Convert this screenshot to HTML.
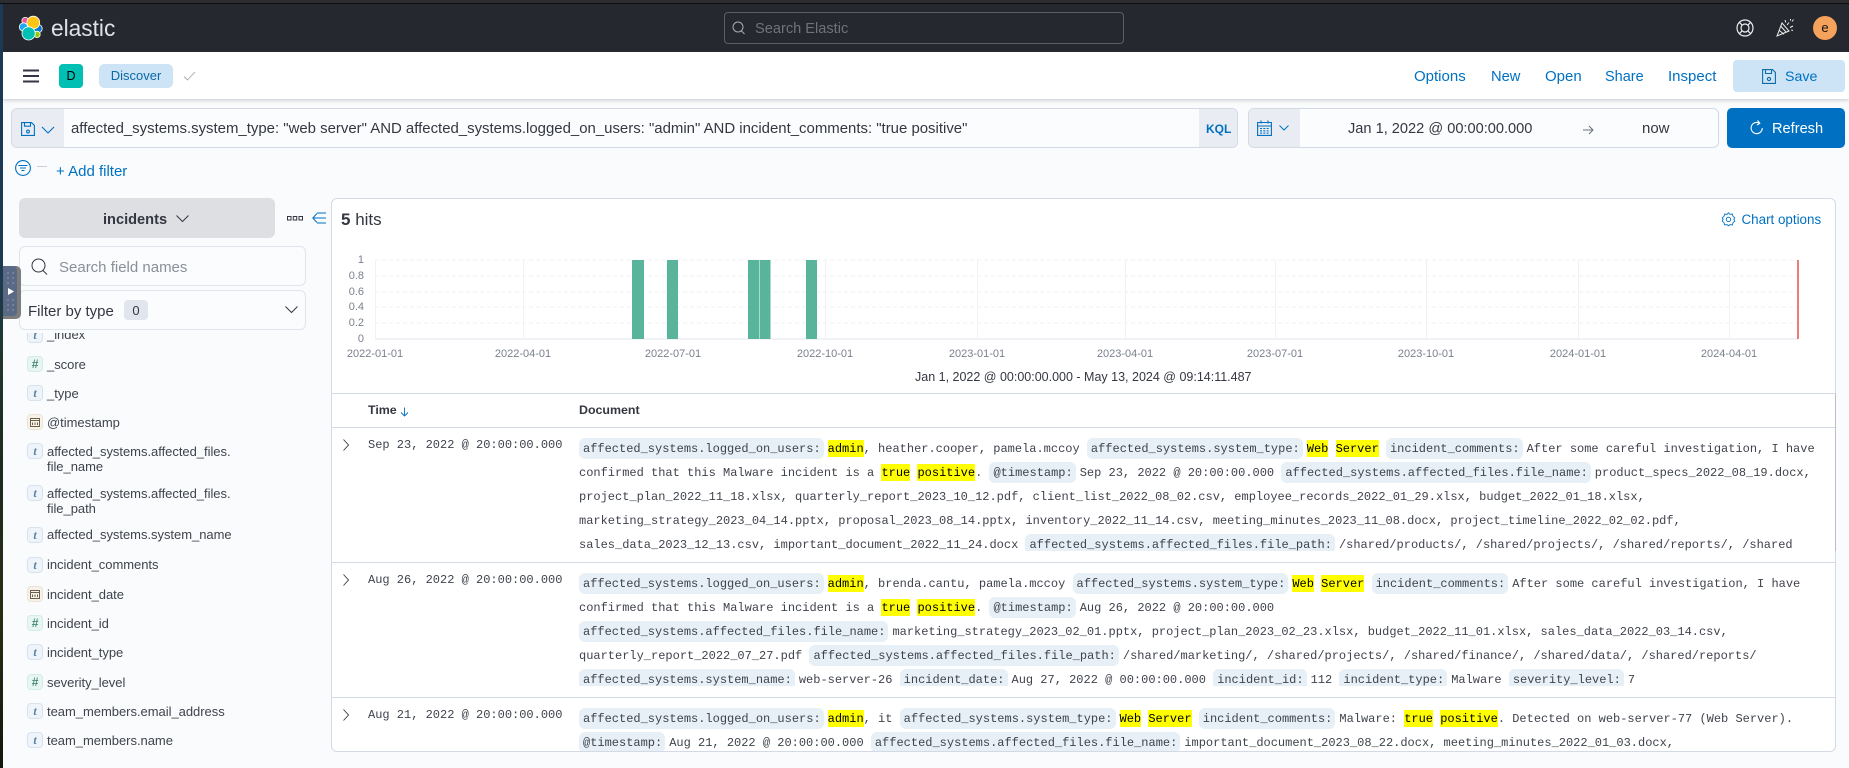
<!DOCTYPE html>
<html lang="en"><head><meta charset="utf-8"><title>Discover - Elastic</title>
<style>
*{box-sizing:border-box}
html,body{margin:0;padding:0;width:1849px;height:768px;overflow:hidden;background:#fafbfd;font-family:"Liberation Sans",sans-serif;color:#343741}
.a{position:absolute;white-space:nowrap;line-height:20px}
svg{position:absolute;overflow:visible}
.blue{color:#0071c2}
.box{position:absolute;background:#fbfcfd;border:1px solid #d3dae6;border-radius:6px}
.fi{position:absolute;left:24px;width:16px;height:16px;border-radius:4px;border:1px solid;font:italic bold 12px/14px "Liberation Serif",serif;text-align:center}
.ft{background:#eef4f9;border-color:#d5e3ef;color:#5a82a3}
.fn{background:#e8f6f1;border-color:#d2ede3;color:#4a8a78;font-family:"Liberation Sans",sans-serif;font-size:12px}
.fd{background:#f6f2ea;border-color:#ebe4d6}
.fl{position:absolute;left:44px;font-size:13px;line-height:15px;color:#3f434c;white-space:nowrap;letter-spacing:-.03px}
.time{position:absolute;left:368px;font:12px/16px "Liberation Mono",monospace;color:#3f434c;white-space:nowrap}
.doc{position:absolute;left:579px;width:1247px;overflow:hidden;font:12px/24px "Liberation Mono",monospace;color:#3f434c}
.doc b{font-weight:400;background:#e6f0f6;border-radius:6px;padding:4px 3px 3px 4px;margin-right:4px}
.doc mark{background:#ff0;color:#000;padding:2px 0 1px}
.line{position:absolute;left:332px;width:1503px;height:1px;background:#d3dae6}
</style></head><body>

<!-- desktop edges -->
<div style="position:absolute;left:0;top:0;width:1849px;height:3px;background:#2c2c31"></div>
<div style="position:absolute;left:0;top:3px;width:1849px;height:1px;background:#0c0c0e"></div>
<div style="position:absolute;left:0;top:4px;width:3px;height:764px;background:linear-gradient(#1c3a55 0,#1b3a52 35%,#20382f 45%,#1d2a1e 62%,#2a2d14 80%,#14160c 100%)"></div>

<!-- header -->
<div style="position:absolute;left:3px;top:4px;width:1846px;height:48px;background:#25282f"></div>
<svg style="left:0;top:0" width="60" height="52">
<circle cx="25.3" cy="20.8" r="3.4" fill="#ee5097" stroke="#fff" stroke-width=".8"/>
<circle cx="23.5" cy="27" r="4.2" fill="#1ba9f5" stroke="#fff" stroke-width=".8"/>
<circle cx="38" cy="28.6" r="4.2" fill="#0077cc" stroke="#fff" stroke-width=".8"/>
<circle cx="37" cy="34.4" r="3.2" fill="#93c90e" stroke="#fff" stroke-width=".8"/>
<circle cx="33.3" cy="22.6" r="6.4" fill="#fec514" stroke="#fff" stroke-width=".8"/>
<circle cx="28.6" cy="33.4" r="6.6" fill="#00bfb3" stroke="#fff" stroke-width=".8"/>
</svg>
<div class="a" style="left:51px;top:16px;font-size:22.7px;line-height:24px;color:#dfe1e4">elastic</div>
<div style="position:absolute;left:724px;top:12px;width:400px;height:32px;border:1px solid #5c5f66;border-radius:4px;background:#25282f"></div>
<svg style="left:732px;top:21px" width="14" height="14" fill="none" stroke="#a9abb0" stroke-width="1"><circle cx="6" cy="6" r="5"/><path d="M9.5 10 L12.5 13"/></svg>
<div class="a" style="left:755px;top:18.500px;font-size:14.600px;color:#6f7279">Search Elastic</div>
<svg style="left:1736px;top:19px" width="18" height="18" fill="none" stroke="#eee" stroke-width="1.2"><circle cx="9" cy="9" r="8"/><circle cx="9" cy="9" r="4"/><path d="M3.300 3.300 L6.100 6.100 M14.700 3.300 L11.900 6.100 M3.300 14.700 L6.100 11.900 M14.700 14.700 L11.900 11.900"/></svg>
<svg style="left:1776px;top:18px" width="19" height="20" fill="none" stroke="#eee" stroke-width="1"><path d="M1 18 L6 5 L13 13 Z M3.400 12.500 L8 16.300 M5 8.500 L10.500 14.500"/><path d="M9 2 L9.800 4.500 M13 4.500 L11 7 M17 8 L14 9.500 M17.500 1.500 L16 3.500 M14.500 1 L14.500 2.500 M17 12.500 L15.200 12"/></svg>
<div style="position:absolute;left:1813px;top:16px;width:24px;height:24px;border-radius:50%;background:#f5a35c;color:#111;text-align:center;font:13px/23px 'Liberation Sans',sans-serif">e</div>

<!-- nav bar -->
<div style="position:absolute;left:3px;top:52px;width:1846px;height:47px;background:#fff;box-shadow:0 1px 4px rgba(60,70,90,.3)"></div>
<svg style="left:23px;top:69px" width="16" height="14" fill="none" stroke="#343741" stroke-width="2"><path d="M0 1.5H16M0 7H16M0 12.500H16"/></svg>
<div style="position:absolute;left:59px;top:64px;width:24px;height:24px;border-radius:4px;background:#00bfb3;color:#000;text-align:center;font:12.5px/24px 'Liberation Sans',sans-serif">D</div>
<div style="position:absolute;left:99px;top:64px;width:74px;height:24px;border-radius:5px;background:#cce4f5;color:#0d68a8;text-align:center;font:13px/24px 'Liberation Sans',sans-serif">Discover</div>
<svg style="left:183px;top:71px" width="13" height="10" fill="none" stroke="#a3a7b0" stroke-width=".9"><path d="M1 5.500 L4.500 9 L12 1"/></svg>
<div class="a blue" style="left:1414px;top:67px;font-size:15px">Options</div>
<div class="a blue" style="left:1491px;top:67px;font-size:14.700px">New</div>
<div class="a blue" style="left:1545px;top:67px;font-size:15px">Open</div>
<div class="a blue" style="left:1605px;top:67px;font-size:14.500px">Share</div>
<div class="a blue" style="left:1668px;top:67px;font-size:15px">Inspect</div>
<div style="position:absolute;left:1733px;top:60px;width:112px;height:32px;border-radius:4px;background:#cce4f5"></div>
<svg style="left:1762px;top:69px" width="14" height="15" fill="none" stroke="#0f6aa8" stroke-width="1.1"><path d="M.6.6H10.500L13.400 3.500V14.400H.6Z"/><path d="M3.500.6V4.500H9.500V.6"/><circle cx="7" cy="10" r="1.600"/></svg>
<div class="a blue" style="left:1785px;top:66.500px;font-size:14.200px">Save</div>

<!-- query bar -->
<div class="box" style="left:11px;top:108px;width:1227px;height:40px;background:#fbfcfd"></div>
<div style="position:absolute;left:12px;top:109px;width:52px;height:38px;background:#e9edf3;border-radius:5px 0 0 5px"></div>
<svg style="left:21px;top:122px" width="14" height="14" fill="none" stroke="#0071c2" stroke-width="1.100"><path d="M.6.6H10.500L13.400 3.500V13.400H.6Z"/><path d="M3.500.6V4.200H9.500V.6"/><circle cx="7" cy="9.500" r="1.400"/></svg>
<svg style="left:41px;top:126px" width="14" height="8" fill="none" stroke="#0071c2" stroke-width="1.100"><path d="M1 1 L7 7 L13 1"/></svg>
<div class="a" style="left:71px;top:119px;font-size:14.950px;color:#343741">affected_systems.system_type: "web server" AND affected_systems.logged_on_users: "admin" AND incident_comments: "true positive"</div>
<div style="position:absolute;left:1199px;top:109px;width:38px;height:38px;background:#e9edf3;border-radius:0 5px 5px 0"></div>
<div class="a" style="left:1206px;top:119px;font-size:12px;font-weight:700;color:#0071c2">KQL</div>

<div class="box" style="left:1248px;top:108px;width:471px;height:40px;background:#fbfcfd"></div>
<div style="position:absolute;left:1249px;top:109px;width:51px;height:38px;background:#e9edf3;border-radius:5px 0 0 5px"></div>
<svg style="left:1257px;top:120px" width="15" height="16" fill="none" stroke="#0071c2" stroke-width="1.100"><path d="M.6 2.500H14.400V15.400H.6ZM.6 6H14.400M4 .5V3.500M11 .5V3.500"/><path d="M3 8.500H12M3 10.800H12M3 13.100H12" stroke-dasharray="2 1.300"/></svg>
<svg style="left:1279px;top:125px" width="10" height="6" fill="none" stroke="#0071c2" stroke-width="1"><path d="M.5 .5 L5 5 L9.500 .5"/></svg>
<div class="a" style="left:1348px;top:119px;font-size:14.600px">Jan 1, 2022 @ 00:00:00.000</div>
<svg style="left:1583px;top:125px" width="11" height="10" fill="none" stroke="#69707d" stroke-width="1"><path d="M0 5H10M6 1L10 5L6 9"/></svg>
<div class="a" style="left:1642px;top:119px;font-size:15px">now</div>
<div style="position:absolute;left:1727px;top:108px;width:118px;height:40px;border-radius:5px;background:#0071c2"></div>
<svg style="left:1750px;top:120px" width="13" height="15" fill="none" stroke="#fff" stroke-width="1.100"><path d="M9.500 3.200A5.600 5.600 0 1 0 12.300 8"/><path d="M7.500 .5L9.800 3.200L7 5"/></svg>
<div class="a" style="left:1772px;top:119px;font-size:14.600px;color:#fff">Refresh</div>

<!-- filter row -->
<svg style="left:15px;top:160px" width="16" height="16" fill="none" stroke="#0071c2" stroke-width="1.100"><circle cx="8" cy="8" r="7.400"/><path d="M3.500 5.500H12.500M5 8H11M6.500 10.500H9.500"/></svg>
<div style="position:absolute;left:37px;top:166px;width:10px;height:1px;background:#c9ced7"></div>
<div class="a blue" style="left:56px;top:162px;font-size:15px">+ Add filter</div>

<!-- sidebar -->
<div style="position:absolute;left:19px;top:198px;width:256px;height:40px;border-radius:6px;background:#dedfe3"></div>
<div class="a" style="left:103px;top:209.500px;font-size:14.600px;font-weight:700">incidents</div>
<svg style="left:176px;top:215px" width="13" height="8" fill="none" stroke="#343741" stroke-width="1"><path d="M.5 .5L6.500 6.500L12.500 .5"/></svg>
<svg style="left:287px;top:216px" width="16" height="5" fill="none" stroke="#343741" stroke-width="1"><rect x=".5" y=".5" width="3.500" height="3.500"/><rect x="6.250" y=".5" width="3.500" height="3.500"/><rect x="12" y=".5" width="3.500" height="3.500"/></svg>
<svg style="left:312px;top:212px" width="15" height="12" fill="none" stroke="#0071c2" stroke-width="1"><path d="M5 1H14M1 6H14M5 11H14M5 1.500L.8 6L5 10.500"/></svg>

<div class="box" style="left:19px;top:246px;width:287px;height:40px;border-color:#e0e4ec"></div>
<svg style="left:31px;top:258px" width="17" height="17" fill="none" stroke="#343741" stroke-width="1"><circle cx="7.500" cy="7.500" r="6.500"/><path d="M12 12.500L16 16.500"/></svg>
<div class="a" style="left:59px;top:257.500px;font-size:15px;color:#8a8f99">Search field names</div>
<div class="box" style="left:19px;top:290px;width:287px;height:40px;border-color:#e0e4ec"></div>
<div class="a" style="left:28px;top:301.500px;font-size:15px">Filter by type</div>
<div style="position:absolute;left:124px;top:300px;width:24px;height:20px;border-radius:4px;background:#e0e5ee;text-align:center;font:13px/21px 'Liberation Sans',sans-serif">0</div>
<svg style="left:285px;top:306px" width="13" height="8" fill="none" stroke="#343741" stroke-width="1"><path d="M.5 .5L6.500 6.500L12.500 .5"/></svg>

<div style="position:absolute;left:3px;top:333px;width:320px;height:435px;overflow:hidden">
<span class="fi ft" style="top:-6px">t</span><span class="fl" style="top:-6px">_index</span>
<span class="fi fn" style="top:23px">#</span><span class="fl" style="top:24px">_score</span>
<span class="fi ft" style="top:52px">t</span><span class="fl" style="top:53px">_type</span>
<span class="fi fd" style="top:81px"><svg style="left:2px;top:2px" width="10" height="10" fill="none" stroke="#6b5f47" stroke-width="1"><path d="M.5 1.500H9.500V9.500H.5ZM.5 3.500H9.500M2.500 5.500V8M5 5.500V8M7.500 5.500V8"/></svg></span><span class="fl" style="top:81.500px">@timestamp</span>
<span class="fi ft" style="top:110px">t</span><span class="fl" style="top:110.500px">affected_systems.affected_files.<br>file_name</span>
<span class="fi ft" style="top:152px">t</span><span class="fl" style="top:152.500px">affected_systems.affected_files.<br>file_path</span>
<span class="fi ft" style="top:194px">t</span><span class="fl" style="top:194px">affected_systems.system_name</span>
<span class="fi ft" style="top:224px">t</span><span class="fl" style="top:224px">incident_comments</span>
<span class="fi fd" style="top:253px"><svg style="left:2px;top:2px" width="10" height="10" fill="none" stroke="#6b5f47" stroke-width="1"><path d="M.5 1.500H9.500V9.500H.5ZM.5 3.500H9.500M2.500 5.500V8M5 5.500V8M7.500 5.500V8"/></svg></span><span class="fl" style="top:253.500px">incident_date</span>
<span class="fi fn" style="top:282px">#</span><span class="fl" style="top:282.500px">incident_id</span>
<span class="fi ft" style="top:311px">t</span><span class="fl" style="top:311.500px">incident_type</span>
<span class="fi fn" style="top:341px">#</span><span class="fl" style="top:341.500px">severity_level</span>
<span class="fi ft" style="top:370px">t</span><span class="fl" style="top:370.500px">team_members.email_address</span>
<span class="fi ft" style="top:399px">t</span><span class="fl" style="top:399.500px">team_members.name</span>
</div>

<!-- handle -->
<div style="position:absolute;left:3px;top:266px;width:18px;height:53px;background:#7d7d7d;border-radius:0 5px 5px 0"></div>
<div style="position:absolute;left:3px;top:266px;width:14px;height:50px;background:#5a6a86;border-radius:0 4px 4px 0"></div>
<svg style="left:3px;top:266px" width="16" height="50"><g fill="#8492a8"><circle cx="5" cy="7" r=".9"/><circle cx="10" cy="7" r=".9"/><circle cx="5" cy="12" r=".9"/><circle cx="10" cy="12" r=".9"/><circle cx="5" cy="17" r=".9"/><circle cx="10" cy="17" r=".9"/><circle cx="5" cy="34" r=".9"/><circle cx="10" cy="34" r=".9"/><circle cx="5" cy="39" r=".9"/><circle cx="10" cy="39" r=".9"/><circle cx="5" cy="44" r=".9"/><circle cx="10" cy="44" r=".9"/></g><path d="M5 22L11 25.500L5 29Z" fill="#fff"/></svg>

<!-- main card -->
<div style="position:absolute;left:331px;top:198px;width:1505px;height:554px;background:#fff;border:1px solid #d3dae6;border-radius:6px"></div>
<div class="a" style="left:341px;top:209.500px;font-size:17px"><b>5</b> hits</div>
<svg style="left:1722px;top:212px" width="13" height="14" fill="none" stroke="#0071c2" stroke-width=".9"><path d="M6.500 .8L8 2.400L10.300 2L11 4.300L12.800 5.800L11.800 7.500L12.800 9.200L11 10.700L10.300 13L8 12.600L6.500 13.800L5 12.600L2.700 13L2 10.700L.2 9.200L1.200 7.500L.2 5.800L2 4.300L2.700 2L5 2.400Z"/><circle cx="6.500" cy="7.400" r="2.200"/></svg>
<div class="a blue" style="left:1741.500px;top:209.500px;font-size:13.400px">Chart options</div>

<!-- chart -->
<svg style="left:0;top:0" width="1849" height="400">
<g stroke="#f1f2f5" stroke-width="1" fill="none">
<path stroke-dasharray="4 3" d="M375 260H1798M375 276H1798M375 292H1798M375 307H1798M375 323H1798"/>
<path stroke-width="2" stroke="#f1f2f5" d="M375 339H1798"/>
<path d="M375.500 260V339M523.500 260V339M673.500 260V339M825.500 260V339M977.500 260V339M1125.500 260V339M1275.500 260V339M1426.500 260V339M1578.500 260V339M1729.500 260V339"/>
</g>
<g fill="#58b49b"><rect x="632" y="260" width="12" height="79"/><rect x="667" y="260" width="11" height="79"/><rect x="748" y="260" width="11.500" height="79"/><rect x="760" y="260" width="10.500" height="79"/><rect x="806" y="260" width="11" height="79"/></g>
<rect x="1797" y="260" width="2" height="79" fill="#ea7d78"/>
<g font-family="Liberation Sans, sans-serif" font-size="11" fill="#7a808c" text-anchor="end">
<text x="364" y="263">1</text><text x="364" y="279">0.8</text><text x="364" y="295">0.6</text><text x="364" y="310">0.4</text><text x="364" y="326">0.2</text><text x="364" y="342">0</text>
</g>
<g font-family="Liberation Sans, sans-serif" font-size="11" fill="#7a808c" text-anchor="middle">
<text x="375" y="357">2022-01-01</text><text x="523" y="357">2022-04-01</text><text x="673" y="357">2022-07-01</text><text x="825" y="357">2022-10-01</text><text x="977" y="357">2023-01-01</text><text x="1125" y="357">2023-04-01</text><text x="1275" y="357">2023-07-01</text><text x="1426" y="357">2023-10-01</text><text x="1578" y="357">2024-01-01</text><text x="1729" y="357">2024-04-01</text>
</g>
</svg>
<div class="a" style="left:915px;top:367px;font-size:12.500px">Jan 1, 2022 @ 00:00:00.000 - May 13, 2024 @ 09:14:11.487</div>

<!-- table -->
<div class="line" style="top:393px"></div>
<div class="line" style="top:427px"></div>
<div class="line" style="top:562px"></div>
<div class="line" style="top:697px"></div>
<div style="position:absolute;left:1835px;top:394px;width:1px;height:157px;background:#b9bec8"></div>
<div class="a" style="left:368px;top:400px;font-size:12.400px;font-weight:700">Time</div>
<svg style="left:400px;top:407px" width="9" height="10" fill="none" stroke="#0071c2" stroke-width=".9"><path d="M4.500 .5V9M1 5.500L4.500 9L8 5.500"/></svg>
<div class="a" style="left:579px;top:400px;font-size:12.400px;font-weight:700">Document</div>

<svg style="left:343px;top:439px" width="6" height="12" fill="none" stroke="#343741" stroke-width=".9"><path d="M.5 .5L5.500 6L.5 11.500"/></svg>
<div class="time" style="top:437px">Sep 23, 2022 @ 20:00:00.000</div>
<div class="doc" style="top:437px;height:114px"><b>affected_systems.logged_on_users:</b><mark>admin</mark>, heather.cooper, pamela.mccoy <b>affected_systems.system_type:</b><mark>Web</mark> <mark>Server</mark> <b>incident_comments:</b>After some careful investigation, I have confirmed that this Malware incident is a <mark>true</mark> <mark>positive</mark>. <b>@timestamp:</b>Sep 23, 2022 @ 20:00:00.000 <b>affected_systems.affected_files.file_name:</b>product_specs_2022_08_19.docx, project_plan_2022_11_18.xlsx, quarterly_report_2023_10_12.pdf, client_list_2022_08_02.csv, employee_records_2022_01_29.xlsx, budget_2022_01_18.xlsx, marketing_strategy_2023_04_14.pptx, proposal_2023_08_14.pptx, inventory_2022_11_14.csv, meeting_minutes_2023_11_08.docx, project_timeline_2022_02_02.pdf, sales_data_2023_12_13.csv, important_document_2022_11_24.docx <b>affected_systems.affected_files.file_path:</b>/shared/products/, /shared/projects/, /shared/reports/, /shared /marketing/</div>

<svg style="left:343px;top:574px" width="6" height="12" fill="none" stroke="#343741" stroke-width=".9"><path d="M.5 .5L5.500 6L.5 11.500"/></svg>
<div class="time" style="top:572px">Aug 26, 2022 @ 20:00:00.000</div>
<div class="doc" style="top:572px;height:114px"><b>affected_systems.logged_on_users:</b><mark>admin</mark>, brenda.cantu, pamela.mccoy <b>affected_systems.system_type:</b><mark>Web</mark> <mark>Server</mark> <b>incident_comments:</b>After some careful investigation, I have confirmed that this Malware incident is a <mark>true</mark> <mark>positive</mark>. <b>@timestamp:</b>Aug 26, 2022 @ 20:00:00.000 <b>affected_systems.affected_files.file_name:</b>marketing_strategy_2023_02_01.pptx, project_plan_2023_02_23.xlsx, budget_2022_11_01.xlsx, sales_data_2022_03_14.csv, quarterly_report_2022_07_27.pdf <b>affected_systems.affected_files.file_path:</b>/shared/marketing/, /shared/projects/, /shared/finance/, /shared/data/, /shared/reports/ <b>affected_systems.system_name:</b>web-server-26 <b>incident_date:</b>Aug 27, 2022 @ 00:00:00.000 <b>incident_id:</b>112 <b>incident_type:</b>Malware <b>severity_level:</b>7</div>

<svg style="left:343px;top:709px" width="6" height="12" fill="none" stroke="#343741" stroke-width=".9"><path d="M.5 .5L5.500 6L.5 11.500"/></svg>
<div class="time" style="top:707px">Aug 21, 2022 @ 20:00:00.000</div>
<div class="doc" style="top:707px;height:44px"><b>affected_systems.logged_on_users:</b><mark>admin</mark>, it <b>affected_systems.system_type:</b><mark>Web</mark> <mark>Server</mark> <b>incident_comments:</b>Malware: <mark>true</mark> <mark>positive</mark>. Detected on web-server-77 (Web Server). <b>@timestamp:</b>Aug 21, 2022 @ 20:00:00.000 <b>affected_systems.affected_files.file_name:</b>important_document_2023_08_22.docx, meeting_minutes_2022_01_03.docx,</div>

</body></html>
